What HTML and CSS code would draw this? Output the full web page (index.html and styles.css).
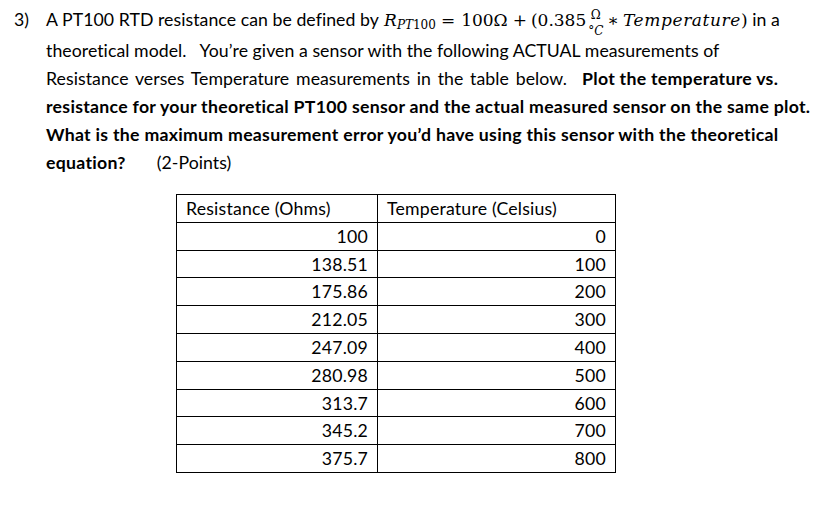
FILE: index.html
```html
<!DOCTYPE html>
<html>
<head>
<meta charset="utf-8">
<link rel="stylesheet" href="styles.css">
</head>
<body>
<div class="question">
  <div class="num">3)</div>
  <div class="text">
    <div class="line first">A PT100 RTD resistance can be defined by <span class="math"><i class="r">R</i><sub><i>PT</i>100</sub><span class="eq">=</span>100Ω<span class="plus">+</span>(0.385<span class="frac"><span class="top">Ω</span><span class="bot">°<i>C</i></span></span><span class="star">∗</span><i class="temp">Temperature</i>)</span> in a</div>
    <div class="line">theoretical model.&nbsp;&nbsp; You’re given a sensor with the following ACTUAL measurements of</div>
    <div class="line"><span class="spaced">Resistance verses Temperature measurements in the table below.</span><span class="gap2"></span><b>Plot the temperature vs.</b></div>
    <div class="line"><b>resistance for your theoretical PT100 sensor and the actual measured sensor on the same plot.</b></div>
    <div class="line"><b>What is the maximum measurement error you’d have using this sensor with the theoretical</b></div>
    <div class="line"><b>equation?</b><span class="gap"></span>(2-Points)</div>
  </div>
</div>
<table class="data">
  <thead>
    <tr><th class="c1">Resistance (Ohms)</th><th class="c2">Temperature (Celsius)</th></tr>
  </thead>
  <tbody>
    <tr><td>100</td><td>0</td></tr>
    <tr><td>138.51</td><td>100</td></tr>
    <tr><td>175.86</td><td>200</td></tr>
    <tr><td>212.05</td><td>300</td></tr>
    <tr><td>247.09</td><td>400</td></tr>
    <tr><td>280.98</td><td>500</td></tr>
    <tr><td>313.7</td><td>600</td></tr>
    <tr><td>345.2</td><td>700</td></tr>
    <tr><td>375.7</td><td>800</td></tr>
  </tbody>
</table>
</body>
</html>
```

FILE: styles.css
```css
html, body {
  margin: 0;
  padding: 0;
  background: #ffffff;
}
body {
  font-family: Lato, "Open Sans", sans-serif;
  font-size: 17.7px;
  letter-spacing: 0.05px;
  color: #000;
}
b {
  letter-spacing: 0.28px;
}
.spaced { word-spacing: 2.2px; }
.gap2 { display: inline-block; width: 15px; }
.question {
  display: flex;
  padding: 6px 0 0 14px;
}
.num {
  width: 32px;
  line-height: 28px;
}
.text {
  flex: 1;
}
.line {
  height: 28px;
  line-height: 28px;
  white-space: nowrap;
}
.line.first {
  height: 31px;
}
.math {
  font-family: "DejaVu Serif", "Liberation Serif", serif;
  font-size: 17px;
  letter-spacing: 0;
}
.r { margin-left: 1px; }
.math sub {
  font-size: 12px;
  vertical-align: -3px;
  line-height: 0;
}
.eq { margin: 0 6px 0 5px; }
.plus { margin: 0 4px 0 5px; }
.star { margin: 0 4px 0 3px; }
.temp { letter-spacing: 0.6px; }
.frac {
  display: inline-flex;
  flex-direction: column;
  align-items: center;
  vertical-align: 7px;
  font-size: 12px;
  line-height: 16px;
  margin: 0 1px 0 2px;
}
.gap { display: inline-block; width: 31px; }
.data {
  border-collapse: collapse;
  margin: 17px 0 0 176px;
  letter-spacing: 0.2px;
}
.data th, .data td {
  border: 1.5px solid #000;
  padding: 2px 9px 0;
  font-weight: normal;
  line-height: 24.8px;
}
.data th { text-align: left; }
.data td { text-align: right; }
.c1 { width: 182px; }
.c2 { width: 219px; }
```
